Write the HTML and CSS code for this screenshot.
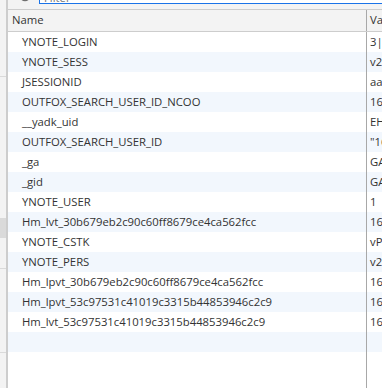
FILE: index.html
```html
<!DOCTYPE html>
<html>
<head>
<meta charset="utf-8">
<link rel="stylesheet" href="styles.css">
</head>
<body>
<div class="app">
  <aside class="sidebar">
    <div class="side-sep s1"></div>
    <div class="side-sel"></div>
    <div class="side-sep s2"></div>
    <div class="side-sep s3"></div>
  </aside>
  <main class="main">
    <div class="toolbar">
      <svg class="tb-icon" width="12" height="12" viewBox="0 0 12 12"><circle cx="6" cy="6" r="5.3" fill="#6f6f6f"/></svg>
      <input class="filter" type="text" placeholder="Filter">
    </div>
    <div class="table">
      <div class="row head"><div class="c-name">Name</div><div class="c-val">Value</div></div>
      <div class="row"><div class="c-name">YNOTE_LOGIN</div><div class="c-val">3||1639451234</div></div>
      <div class="row alt"><div class="c-name">YNOTE_SESS</div><div class="c-val">v2|Jq8rFb</div></div>
      <div class="row"><div class="c-name">JSESSIONID</div><div class="c-val">aaaXk2Jd</div></div>
      <div class="row alt"><div class="c-name">OUTFOX_SEARCH_USER_ID_NCOO</div><div class="c-val">1639451</div></div>
      <div class="row"><div class="c-name">__yadk_uid</div><div class="c-val">EHJ2kq</div></div>
      <div class="row alt"><div class="c-name">OUTFOX_SEARCH_USER_ID</div><div class="c-val">"1639"</div></div>
      <div class="row"><div class="c-name">_ga</div><div class="c-val">GA1.2.1</div></div>
      <div class="row alt"><div class="c-name">_gid</div><div class="c-val">GA1.2.9</div></div>
      <div class="row"><div class="c-name">YNOTE_USER</div><div class="c-val">1</div></div>
      <div class="row alt"><div class="c-name">Hm_lvt_30b679eb2c90c60ff8679ce4ca562fcc</div><div class="c-val">1639451</div></div>
      <div class="row"><div class="c-name">YNOTE_CSTK</div><div class="c-val">vPq9</div></div>
      <div class="row alt"><div class="c-name">YNOTE_PERS</div><div class="c-val">v2|urs</div></div>
      <div class="row"><div class="c-name">Hm_lpvt_30b679eb2c90c60ff8679ce4ca562fcc</div><div class="c-val">1639451</div></div>
      <div class="row alt"><div class="c-name">Hm_lpvt_53c97531c41019c3315b44853946c2c9</div><div class="c-val">1639451</div></div>
      <div class="row"><div class="c-name">Hm_lvt_53c97531c41019c3315b44853946c2c9</div><div class="c-val">1639451</div></div>
      <div class="row alt"><div class="c-name"></div><div class="c-val"></div></div>
      <div class="row filler"><div class="c-name"></div><div class="c-val"></div></div>
    </div>
  </main>
</div>
</body>
</html>
```

FILE: styles.css
```css
html, body {
  margin: 0;
  padding: 0;
  height: 100%;
  overflow: hidden;
  background: #ffffff;
}

.app {
  display: flex;
  height: 100vh;
  font-family: "Open Sans", "Noto Sans", sans-serif;
  font-size: 11.3px;
  color: #333333;
}

.sidebar {
  width: 6px;
  flex: none;
  background: #f3f3f3;
  border-right: 2px solid #cdcdcd;
  display: flex;
  flex-direction: column;
}

.side-sep {
  height: 1px;
  background: #dadada;
}
.s1 { margin-top: 76px; }
.side-sel {
  margin-top: 141px;
  height: 20px;
  background: #dadada;
}
.s2 { margin-top: 30px; }
.s3 { margin-top: 83px; }

.main {
  flex: 1;
  min-width: 0;
  display: flex;
  flex-direction: column;
}

.toolbar {
  height: 10px;
  flex: none;
  box-sizing: border-box;
  background: #f3f3f3;
  border-bottom: 1px solid #cdcdcd;
  display: flex;
  align-items: flex-end;
  padding-bottom: 5px;
  padding-left: 11px;
}

.tb-icon {
  flex: none;
  margin-bottom: 2px;
}

.filter {
  flex: 1;
  min-width: 0;
  margin-left: 8px;
  height: 22px;
  box-sizing: border-box;
  padding: 8px 4px 0 4px;
  border: 1px solid #1a73e8;
  border-right: none;
  outline: none;
  font-family: inherit;
  font-size: 11.3px;
  color: #333333;
  background: #ffffff;
}
.filter::placeholder {
  color: #757575;
}

.table {
  flex: 1;
  display: flex;
  flex-direction: column;
  min-height: 0;
}

.row {
  display: grid;
  grid-template-columns: 358px 1fr;
  height: 20px;
  line-height: 20px;
  flex: none;
  white-space: nowrap;
}

.row.alt {
  background: #f2f7fd;
}

.row.head {
  height: 21px;
  background: #f3f3f3;
  border-bottom: 1px solid #cdcdcd;
  line-height: 20px;
}

.c-name {
  padding-left: 14px;
  overflow: hidden;
}

.head .c-name {
  padding-left: 4px;
}

.c-val {
  border-left: 1px solid #a8a8a8;
  padding-left: 3px;
  overflow: hidden;
}

.row.filler {
  flex: 1;
  height: auto;
}
```
